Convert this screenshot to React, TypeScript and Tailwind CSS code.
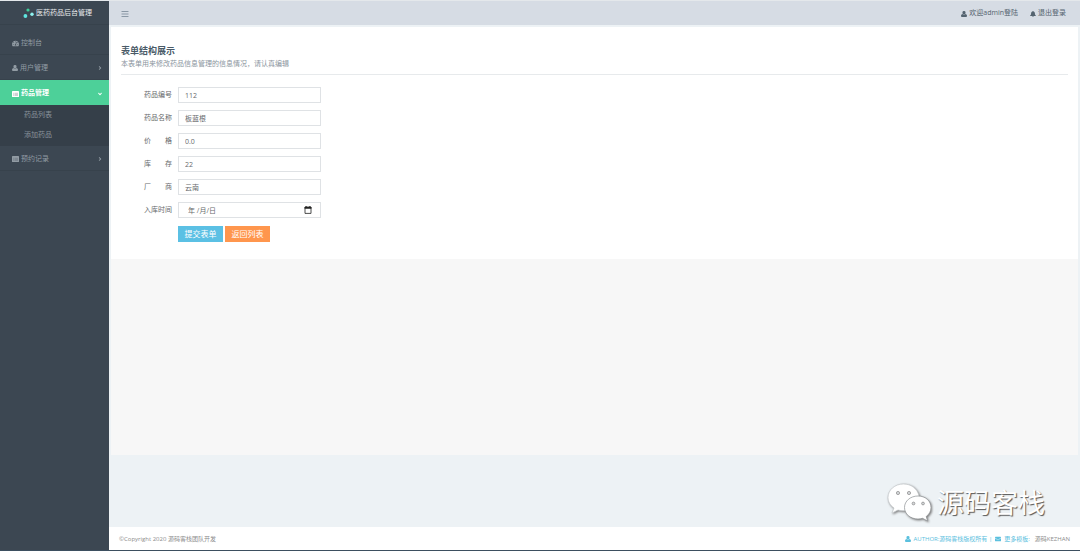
import { useState } from 'react';
import { FaAngleDown, FaAngleRight, FaBars, FaEnvelope, FaTachometerAlt } from 'react-icons/fa';

interface Field {
  id: string;
  label: string;
  value: string;
}

const fields: Field[] = [
  { id: 'code', label: '药品编号', value: '112' },
  { id: 'name', label: '药品名称', value: '板蓝根' },
  { id: 'price', label: '价 格', value: '0.0' },
  { id: 'stock', label: '库 存', value: '22' },
  { id: 'maker', label: '厂 商', value: '云南' },
];

const labelClass = 'w-7 shrink-0 [text-align-last:justify]';
const inputClass =
  'h-4 w-full border border-[#dfe2e5] bg-white px-[6px] text-[7px] text-[#676a6c] outline-none';

function Logo() {
  return (
    <svg viewBox="0 0 11 11" className="size-[11px]" aria-hidden="true">
      <circle cx="5" cy="2" r="1.6" fill="#3fcf9a" />
      <circle cx="2.4" cy="8" r="1.9" fill="#5fe6e0" />
      <circle cx="9" cy="6.2" r="1.7" fill="#8df3f0" />
    </svg>
  );
}

function UserIcon() {
  return (
    <svg viewBox="0 0 12 12" className="size-[6px] shrink-0" fill="currentColor" aria-hidden="true">
      <path d="M6 0a3.100 3.100 0 0 1 3.100 3.300C9.100 5.300 7.800 7 6 7S2.900 5.300 2.900 3.300A3.100 3.100 0 0 1 6 0z" />
      <path d="M3 6.200C1 6.400 0 8 0 10.200 0 11.400.8 12 1.800 12h8.400c1 0 1.800-.6 1.800-1.800C12 8 11 6.400 9 6.200 8.200 7.200 7.200 7.700 6 7.700S3.800 7.200 3 6.200z" />
    </svg>
  );
}

function BellIcon() {
  return (
    <svg viewBox="0 0 12 12" className="size-[6px] shrink-0" fill="currentColor" aria-hidden="true">
      <path d="M6 0c.5 0 .9.3.9.8C9 1.200 9.800 3 9.800 4.500c0 2.500.7 4 2.200 5.200v.5H0v-.5c1.500-1.200 2.200-2.700 2.200-5.200C2.200 3 3 1.200 5.100.8 5.100.3 5.500 0 6 0zM4.300 10.600h3.400C7.600 11.500 6.900 12 6 12s-1.600-.5-1.700-1.400z" />
    </svg>
  );
}

function ListIcon() {
  return (
    <svg viewBox="0 0 14 12" className="h-[6px] w-[7px] shrink-0" aria-hidden="true">
      <rect width="14" height="12" rx="1.2" fill="currentColor" />
      <path
        d="M2 4.500h1.500M5 4.500h7M2 6.700h1.500M5 6.700h7M2 8.900h1.500M5 8.900h7"
        stroke="#3c4752"
        strokeOpacity=".55"
        strokeWidth="1"
      />
    </svg>
  );
}

function CalendarIcon() {
  return (
    <svg viewBox="0 0 8 8" className="size-2" aria-hidden="true">
      <path d="M1 1h6v6.4H1z" fill="none" stroke="#222" strokeWidth=".8" />
      <path d="M.6.9h6.8v1.9H.6zM1.6.1h1v1h-1zM5.4.1h1v1h-1z" fill="#222" />
    </svg>
  );
}

function Sidebar() {
  const row =
    'flex h-[25px] items-center gap-[2px] border-b border-[#37424c] pl-3 pr-[6px] pt-[2px]';

  return (
    <aside className="w-[109px] shrink-0 bg-[#3c4752] text-[7px] text-[#929ca4]">
      <div className="flex h-6 items-center gap-[2px] border-b border-[#37424c] pl-[23px] pt-[2px] text-[#e8ebed]">
        <Logo />
        <span>医药药品后台管理</span>
      </div>
      <nav className="pt-[5px]">
        <a href="#console" className={row}>
          <FaTachometerAlt className="size-[7px]" />
          控制台
        </a>
        <a href="#users" className={row}>
          <UserIcon />
          <span className="grow">用户管理</span>
          <FaAngleRight className="size-[6px]" />
        </a>
        <a
          href="#drugs"
          className="flex h-[25px] items-center gap-[2px] bg-[#4dd099] pl-3 pr-[6px] pt-[2px] font-bold text-white"
        >
          <ListIcon />
          <span className="grow">药品管理</span>
          <FaAngleDown className="size-[6px]" />
        </a>
        <div className="bg-[#353f49] pb-px text-[#88929a]">
          <a href="#drug-list" className="flex h-5 items-center pl-6 pt-px">
            药品列表
          </a>
          <a href="#drug-add" className="flex h-5 items-center pl-6 pt-px">
            添加药品
          </a>
        </div>
        <a href="#records" className={row}>
          <ListIcon />
          <span className="grow">预约记录</span>
          <FaAngleRight className="size-[6px]" />
        </a>
      </nav>
    </aside>
  );
}

function DrugForm() {
  const [values, setValues] = useState<Record<string, string>>(
    Object.fromEntries(fields.map((f) => [f.id, f.value]))
  );
  const [date, setDate] = useState('年 /月/日');

  return (
    <form
      className="flex flex-col gap-[7px] pl-[23px] pt-3 text-[7px] text-[#676a6c]"
      onSubmit={(e) => e.preventDefault()}
    >
      {fields.map((field) => (
        <div key={field.id} className="flex items-center gap-[6px]">
          <label htmlFor={field.id} className={labelClass}>
            {field.label}
          </label>
          <div className="w-[143px]">
            <input
              id={field.id}
              className={inputClass}
              value={values[field.id]}
              onChange={(e) => setValues({ ...values, [field.id]: e.target.value })}
            />
          </div>
        </div>
      ))}
      <div className="flex items-center gap-[6px]">
        <label htmlFor="date" className={labelClass}>
          入库时间
        </label>
        <div className="relative w-[143px]">
          <input
            id="date"
            className="h-4 w-full border border-[#dfe2e5] bg-white pl-[9px] pr-5 text-[7px] text-[#676a6c] outline-none"
            value={date}
            onChange={(e) => setDate(e.target.value)}
          />
          <button type="button" aria-label="选择日期" className="absolute right-[9px] top-1">
            <CalendarIcon />
          </button>
        </div>
      </div>
      <div className="flex gap-[2px] pl-[34px] pt-px text-[8px] text-white">
        <button type="submit" className="h-4 w-[45px] bg-[#5bc0e4]">
          提交表单
        </button>
        <button type="button" className="h-4 w-[45px] bg-[#ff964d]">
          返回列表
        </button>
      </div>
    </form>
  );
}

function Watermark() {
  return (
    <div className="absolute bottom-[27px] right-[35px] flex items-center gap-[6px]">
      <svg
        viewBox="0 0 44 40"
        className="h-10 w-11 drop-shadow-[1px_1px_1px_#777]"
        fill="#fff"
        stroke="#c4c8cb"
        strokeWidth=".7"
        aria-hidden="true"
      >
        <path d="M16.5 1C8 1 1 6.800 1 14.500c0 4.500 2.400 8 6 10.500l-2 5 6-3c2 .6 4 .9 6.500.7C32 27 33 19 31.800 12 30 5.500 24 1 16.500 1z" />
        <path
          d="M31 13c-7.500 0-13.500 5-13.500 11.500S23.500 36 31 36c1.600 0 3.200-.2 4.600-.7l5 2.700-1.400-4.500c3-2.200 4.800-5.300 4.800-9C44 18 38.500 13 31 13z"
          stroke="#8d9194"
        />
        <g fill="#d5d8da" stroke="#888">
          <circle cx="11" cy="10" r="1.600" />
          <circle cx="22" cy="10" r="1.600" />
          <circle cx="26.500" cy="20.500" r="1.400" />
          <circle cx="36" cy="20.500" r="1.400" />
        </g>
      </svg>
      <span className="text-[27px] leading-10 text-white [text-shadow:1px_1px_1px_#555]">
        源码客栈
      </span>
    </div>
  );
}

export default function App() {
  return (
    <div className="flex min-h-screen flex-col border-b border-t border-b-[#3d4f60] border-t-[#e4e8eb] bg-[#edf2f5] font-['Open_Sans','Noto_Sans_CJK_SC',sans-serif]">
      <div className="flex grow">
        <Sidebar />
        <div className="relative flex min-w-0 grow flex-col">
          <header className="flex h-6 items-center justify-between bg-[#d6dce4] pl-3 pr-[14px] pt-px text-[7px] text-[#54636f]">
            <button type="button" aria-label="菜单">
              <FaBars className="size-2 text-[#8a98a5]" />
            </button>
            <div className="flex gap-3">
              <a href="#profile" className="flex items-center gap-[2px]">
                <UserIcon />
                欢迎admin登陆
              </a>
              <a href="#logout" className="flex items-center gap-[2px]">
                <BellIcon />
                退出登录
              </a>
            </div>
          </header>

          <main className="mx-[2px] mb-[72px] mt-[2px] grow bg-[#f7f7f7]">
            <section className="bg-white px-[10px] pb-[17px] pt-[17px]">
              <div className="border-b border-[#e7eaec] pb-1">
                <h1 className="text-[9px] leading-[14px] font-bold text-[#4a5b68]">表单结构展示</h1>
                <p className="text-[7px] leading-3 text-[#8b959e]">
                  本表单用来修改药品信息管理的信息情况，请认真编辑
                </p>
              </div>
              <DrugForm />
            </section>
          </main>

          <footer className="flex h-[23px] items-center justify-between bg-white px-[10px] pt-px text-[6px] text-[#8c8c8c]">
            <span>©Copyright 2020 源码客栈团队开发</span>
            <div className="flex items-center gap-[3px] text-[#5bc0de]">
              <UserIcon />
              <a href="#author">AUTHOR:源码客栈版权所有 |</a>
              <FaEnvelope className="size-[6px]" />
              <a href="#more">更多模板:</a>
              <span className="pl-[2px] text-[#8c8c8c]">源码KEZHAN</span>
            </div>
          </footer>
          <Watermark />
        </div>
      </div>
    </div>
  );
}
